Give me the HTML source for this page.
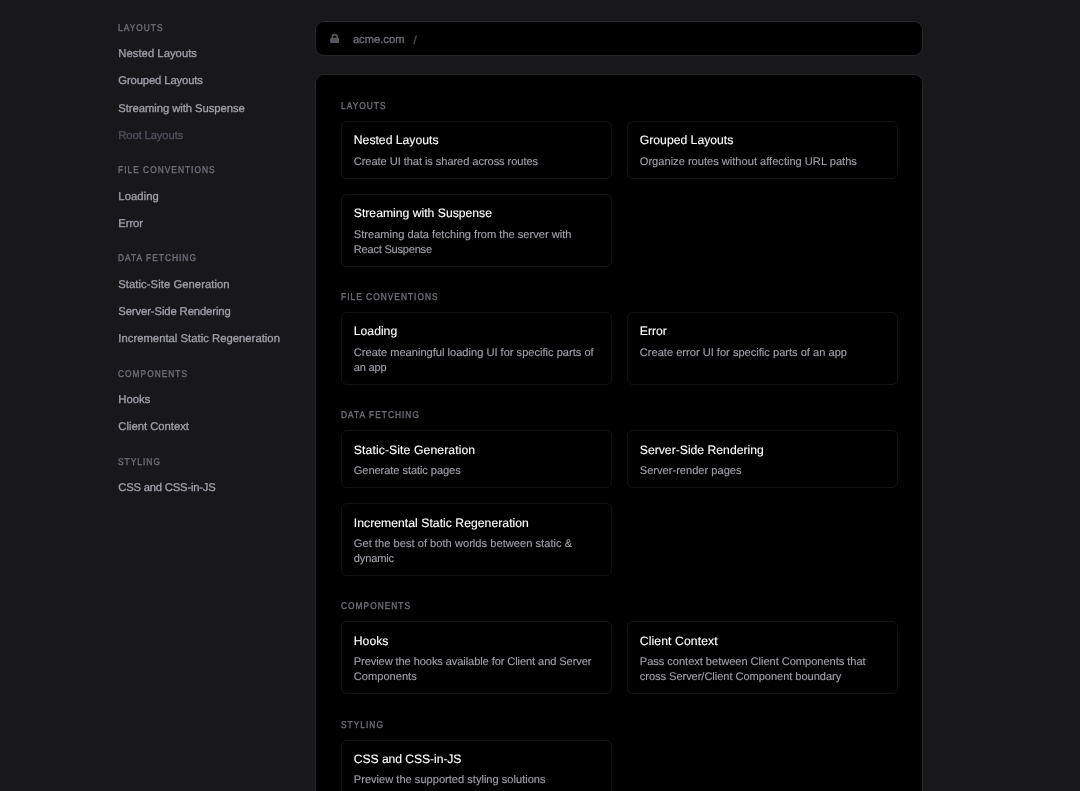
<!DOCTYPE html>
<html><head><meta charset="utf-8"><style>
html,body{margin:0;padding:0;}
html{width:1080px;height:791px;overflow:hidden;background:#18181b;}
body{width:1080px;height:791px;overflow:hidden;background:#18181b;position:relative;font-family:"Liberation Sans",sans-serif;}
#root{position:absolute;left:0;top:0;width:1080px;height:791px;overflow:hidden;will-change:transform;text-rendering:geometricPrecision;}
.t{position:absolute;white-space:nowrap;}
.nav{-webkit-text-stroke:0.3px currentColor;}
.lab{-webkit-text-stroke:0.35px currentColor;transform:scaleX(0.85);transform-origin:0 0;}
.ttl,.dsc{-webkit-text-stroke:0.12px currentColor;}
.box{position:absolute;box-sizing:border-box;background:#000;border:1px solid #27272a;border-radius:9px;}
.card{position:absolute;box-sizing:border-box;border:1px solid rgba(255,255,255,0.075);border-radius:6px;}
</style></head><body><div id="root">
<div class="t lab" style="left:118.30px;top:23px;font-size:9.8px;line-height:11.76px;color:#71717a;letter-spacing:0.125em;">LAYOUTS</div>
<div class="t nav" style="left:118.30px;top:48px;font-size:11.25px;line-height:13.5px;color:#a1a1aa;letter-spacing:0.04px;">Nested Layouts</div>
<div class="t nav" style="left:118.30px;top:75px;font-size:11.25px;line-height:13.5px;color:#a1a1aa;letter-spacing:-0.12px;">Grouped Layouts</div>
<div class="t nav" style="left:118.30px;top:103px;font-size:11.25px;line-height:13.5px;color:#a1a1aa;letter-spacing:-0.05px;">Streaming with Suspense</div>
<div class="t nav" style="left:118.30px;top:130px;font-size:11.25px;line-height:13.5px;color:#52525b;letter-spacing:-0.12px;">Root Layouts</div>
<div class="t lab" style="left:118.30px;top:165px;font-size:9.8px;line-height:11.76px;color:#71717a;letter-spacing:0.125em;">FILE CONVENTIONS</div>
<div class="t nav" style="left:118.30px;top:191px;font-size:11.25px;line-height:13.5px;color:#a1a1aa;letter-spacing:0.08px;">Loading</div>
<div class="t nav" style="left:118.30px;top:218px;font-size:11.25px;line-height:13.5px;color:#a1a1aa;letter-spacing:-0.08px;">Error</div>
<div class="t lab" style="left:118.30px;top:253px;font-size:9.8px;line-height:11.76px;color:#71717a;letter-spacing:0.125em;">DATA FETCHING</div>
<div class="t nav" style="left:118.30px;top:279px;font-size:11.25px;line-height:13.5px;color:#a1a1aa;letter-spacing:0.06px;">Static-Site Generation</div>
<div class="t nav" style="left:118.30px;top:306px;font-size:11.25px;line-height:13.5px;color:#a1a1aa;letter-spacing:-0.1px;">Server-Side Rendering</div>
<div class="t nav" style="left:118.30px;top:333px;font-size:11.25px;line-height:13.5px;color:#a1a1aa;letter-spacing:0.03px;">Incremental Static Regeneration</div>
<div class="t lab" style="left:118.30px;top:369px;font-size:9.8px;line-height:11.76px;color:#71717a;letter-spacing:0.125em;">COMPONENTS</div>
<div class="t nav" style="left:118.30px;top:394px;font-size:11.25px;line-height:13.5px;color:#a1a1aa;letter-spacing:0.06px;">Hooks</div>
<div class="t nav" style="left:118.30px;top:421px;font-size:11.25px;line-height:13.5px;color:#a1a1aa;">Client Context</div>
<div class="t lab" style="left:118.30px;top:457px;font-size:9.8px;line-height:11.76px;color:#71717a;letter-spacing:0.125em;">STYLING</div>
<div class="t nav" style="left:118.30px;top:482px;font-size:11.25px;line-height:13.5px;color:#a1a1aa;letter-spacing:-0.2px;">CSS and CSS-in-JS</div>
<div class="box" style="left:315px;top:21px;width:608px;height:35px;"></div>
<svg style="position:absolute;left:326px;top:30px;width:18px;height:16px" viewBox="326 30 18 16" fill="#55555d"><rect x="330.1" y="37.8" width="8.9" height="5.2" rx="1.1"/><path d="M331.5 38.3V37.05A3.2 3.2 0 0 1 337.9 37.05V38.3H336.3V37.05A1.6 1.6 0 0 0 333.1 37.05V38.3Z"/></svg>
<div class="t nav" style="left:352.90px;top:34px;font-size:11.2px;line-height:13.44px;color:#71717a;">acme.com</div>
<div class="t nav" style="left:413.60px;top:34px;font-size:11.6px;line-height:13.92px;color:#52525b;">/</div>
<div class="box" style="left:315px;top:74px;width:608px;height:760px;"></div>
<div class="t lab" style="left:340.50px;top:101px;font-size:9.8px;line-height:11.76px;color:#71717a;letter-spacing:0.125em;">LAYOUTS</div>
<div class="card" style="left:340.50px;top:121px;width:271px;height:58px;"></div>
<div class="t ttl" style="left:353.80px;top:133px;font-size:12.2px;line-height:14.64px;color:#ffffff;">Nested Layouts</div>
<div class="t dsc" style="left:353.80px;top:156px;font-size:11.1px;line-height:13.32px;color:#a1a1aa;letter-spacing:-0.068px;">Create UI that is shared across routes</div>
<div class="card" style="left:627.00px;top:121px;width:271px;height:58px;"></div>
<div class="t ttl" style="left:639.80px;top:133px;font-size:12.2px;line-height:14.64px;color:#ffffff;">Grouped Layouts</div>
<div class="t dsc" style="left:639.80px;top:156px;font-size:11.1px;line-height:13.32px;color:#a1a1aa;">Organize routes without affecting URL paths</div>
<div class="card" style="left:340.50px;top:194px;width:271px;height:72.6px;"></div>
<div class="t ttl" style="left:353.80px;top:206px;font-size:12.2px;line-height:14.64px;color:#ffffff;">Streaming with Suspense</div>
<div class="t dsc" style="left:353.80px;top:229px;font-size:11.1px;line-height:13.32px;color:#a1a1aa;">Streaming data fetching from the server with</div>
<div class="t dsc" style="left:353.80px;top:244px;font-size:11.1px;line-height:13.32px;color:#a1a1aa;letter-spacing:-0.24px;">React Suspense</div>
<div class="t lab" style="left:340.50px;top:292px;font-size:9.8px;line-height:11.76px;color:#71717a;letter-spacing:0.125em;">FILE CONVENTIONS</div>
<div class="card" style="left:340.50px;top:312px;width:271px;height:72.6px;"></div>
<div class="t ttl" style="left:353.80px;top:324px;font-size:12.2px;line-height:14.64px;color:#ffffff;">Loading</div>
<div class="t dsc" style="left:353.80px;top:347px;font-size:11.1px;line-height:13.32px;color:#a1a1aa;">Create meaningful loading UI for specific parts of</div>
<div class="t dsc" style="left:353.80px;top:362px;font-size:11.1px;line-height:13.32px;color:#a1a1aa;letter-spacing:-0.2px;">an app</div>
<div class="card" style="left:627.00px;top:312px;width:271px;height:72.6px;"></div>
<div class="t ttl" style="left:639.80px;top:324px;font-size:12.2px;line-height:14.64px;color:#ffffff;">Error</div>
<div class="t dsc" style="left:639.80px;top:347px;font-size:11.1px;line-height:13.32px;color:#a1a1aa;">Create error UI for specific parts of an app</div>
<div class="t lab" style="left:340.50px;top:410px;font-size:9.8px;line-height:11.76px;color:#71717a;letter-spacing:0.125em;">DATA FETCHING</div>
<div class="card" style="left:340.50px;top:430px;width:271px;height:58px;"></div>
<div class="t ttl" style="left:353.80px;top:443px;font-size:12.2px;line-height:14.64px;color:#ffffff;letter-spacing:0.1px;">Static-Site Generation</div>
<div class="t dsc" style="left:353.80px;top:465px;font-size:11.1px;line-height:13.32px;color:#a1a1aa;letter-spacing:-0.08px;">Generate static pages</div>
<div class="card" style="left:627.00px;top:430px;width:271px;height:58px;"></div>
<div class="t ttl" style="left:639.80px;top:443px;font-size:12.2px;line-height:14.64px;color:#ffffff;">Server-Side Rendering</div>
<div class="t dsc" style="left:639.80px;top:465px;font-size:11.1px;line-height:13.32px;color:#a1a1aa;">Server-render pages</div>
<div class="card" style="left:340.50px;top:503px;width:271px;height:72.6px;"></div>
<div class="t ttl" style="left:353.80px;top:516px;font-size:12.2px;line-height:14.64px;color:#ffffff;letter-spacing:0.033px;">Incremental Static Regeneration</div>
<div class="t dsc" style="left:353.80px;top:538px;font-size:11.1px;line-height:13.32px;color:#a1a1aa;letter-spacing:0.028px;">Get the best of both worlds between static &amp;</div>
<div class="t dsc" style="left:353.80px;top:553px;font-size:11.1px;line-height:13.32px;color:#a1a1aa;letter-spacing:-0.16px;">dynamic</div>
<div class="t lab" style="left:340.50px;top:601px;font-size:9.8px;line-height:11.76px;color:#71717a;letter-spacing:0.125em;">COMPONENTS</div>
<div class="card" style="left:340.50px;top:621px;width:271px;height:72.6px;"></div>
<div class="t ttl" style="left:353.80px;top:634px;font-size:12.2px;line-height:14.64px;color:#ffffff;">Hooks</div>
<div class="t dsc" style="left:353.80px;top:656px;font-size:11.1px;line-height:13.32px;color:#a1a1aa;letter-spacing:-0.097px;">Preview the hooks available for Client and Server</div>
<div class="t dsc" style="left:353.80px;top:671px;font-size:11.1px;line-height:13.32px;color:#a1a1aa;">Components</div>
<div class="card" style="left:627.00px;top:621px;width:271px;height:72.6px;"></div>
<div class="t ttl" style="left:639.80px;top:634px;font-size:12.2px;line-height:14.64px;color:#ffffff;letter-spacing:0.1px;">Client Context</div>
<div class="t dsc" style="left:639.80px;top:656px;font-size:11.1px;line-height:13.32px;color:#a1a1aa;letter-spacing:-0.04px;">Pass context between Client Components that</div>
<div class="t dsc" style="left:639.80px;top:671px;font-size:11.1px;line-height:13.32px;color:#a1a1aa;letter-spacing:-0.057px;">cross Server/Client Component boundary</div>
<div class="t lab" style="left:340.50px;top:720px;font-size:9.8px;line-height:11.76px;color:#71717a;letter-spacing:0.125em;">STYLING</div>
<div class="card" style="left:340.50px;top:740px;width:271px;height:58px;"></div>
<div class="t ttl" style="left:353.80px;top:752px;font-size:12.2px;line-height:14.64px;color:#ffffff;letter-spacing:-0.085px;">CSS and CSS-in-JS</div>
<div class="t dsc" style="left:353.80px;top:774px;font-size:11.1px;line-height:13.32px;color:#a1a1aa;">Preview the supported styling solutions</div>
</div></body></html>
